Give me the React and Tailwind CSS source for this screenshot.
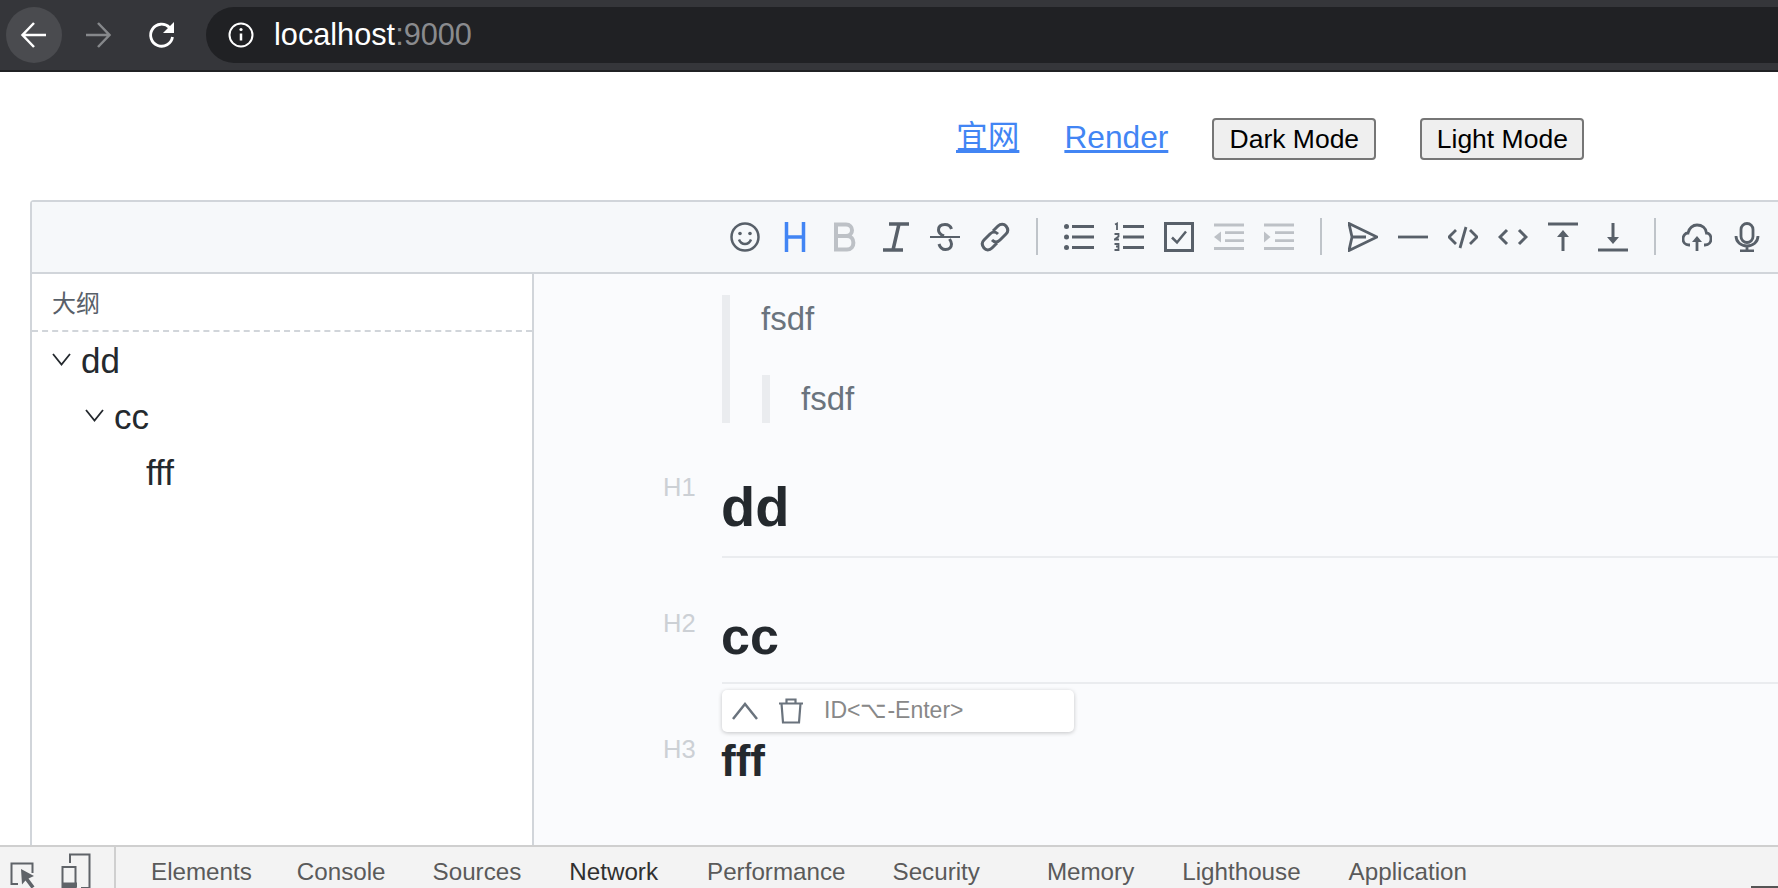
const font = { fontFamily: '"Liberation Sans","Noto Sans CJK SC",sans-serif' };

function Ic({ children, className = "text-[#586069]", w = 30, h = 30, vb = "0 0 30 30" }) {
  return (
    <svg width={w} height={h} viewBox={vb} fill="none" stroke="currentColor" strokeWidth="2.500" className={className}>
      {children}
    </svg>
  );
}

const Btn = ({ children }) => <div className="flex h-[50px] w-[50px] shrink-0 items-center justify-center">{children}</div>;
const Sep = () => <div className="flex h-[37px] w-[34px] shrink-0 justify-center"><div className="h-full w-[2px] bg-[#bfc4c9]" /></div>;

function Toolbar() {
  return (
    <div className="flex h-[72px] items-center border-b-2 border-[#d1d5da] bg-[#f6f8fa] pb-[1px] pl-[688px]">
      <Btn><Ic><circle cx="15" cy="15" r="13.500" /><circle cx="10" cy="11.500" r="1.800" fill="currentColor" stroke="none" /><circle cx="20" cy="11.500" r="1.800" fill="currentColor" stroke="none" /><path d="M9 17.500c1.200 3 3.500 4.500 6 4.500s4.800-1.500 6-4.500" /></Ic></Btn>
      <Btn><Ic className="text-[#4285f4]"><path strokeWidth="3.500" d="M6.500 0v30M23.500 0v30M6.500 15h17" /></Ic></Btn>
      <Btn><Ic className="text-[#bdc1c6]"><path strokeWidth="4" d="M6 2.500h10c8 0 8 11.500 0 11.500H6zM6 14h11c8.500 0 8.500 13.500 0 13.500H6z" /></Ic></Btn>
      <Btn><Ic><path strokeWidth="3.500" d="M9 2h20M3 28h20M19 2L13 28" /></Ic></Btn>
      <Btn><Ic><path strokeWidth="2" d="M0 15h30" /><path strokeWidth="3" d="M21.500 7c-1-3-3-4.500-6.500-4.500-4 0-6.500 2-6.500 5.500 0 2.500 1.500 4.500 5.500 6M9 22c1 3.500 3 5.500 6.500 5.500 4 0 6-2.500 6-5.500 0-2-1-3.500-2-5" /></Ic></Btn>
      <Btn><Ic><path strokeWidth="3" d="M13 9l5-5c2.500-2.500 6-2.500 8 0s2.500 5.500 0 8l-6 6c-2.500 2.500-5.500 2.500-8 0" /><path strokeWidth="3" d="M17 21l-5 5c-2.500 2.500-6 2.500-8 0s-2.500-5.500 0-8l6-6c2.500-2.500 5.500-2.500 8 0" /></Ic></Btn>
      <Sep />
      <Btn><Ic><circle cx="2.500" cy="4.500" r="2.500" fill="currentColor" stroke="none" /><circle cx="2.500" cy="15" r="2.500" fill="currentColor" stroke="none" /><circle cx="2.500" cy="25.500" r="2.500" fill="currentColor" stroke="none" /><path strokeWidth="3" d="M8 4.500h22M8 15h22M8 25.500h22" /></Ic></Btn>
      <Btn><Ic><path strokeWidth="3" d="M9 4.500h21M9 15h21M9 25.500h21" /><path strokeWidth="1.800" d="M1 2.500l2-1v6.500M.5 12h4v2.500l-4 3h4.500M.5 22h4v2.500H2 4.500V28H.5" /></Ic></Btn>
      <Btn><Ic><rect x="1.500" y="1.500" width="27" height="27" strokeWidth="3" /><path strokeWidth="2.500" d="M8 15.500l5 5 9-11" /></Ic></Btn>
      <Btn><Ic className="text-[#bdc1c6]"><path strokeWidth="2.800" d="M0 3h30M11 10.700h19M11 18.700h19M0 26.500h30" /><path d="M7 9.500l-7 5.500 7 5.500z" fill="currentColor" stroke="none" /></Ic></Btn>
      <Btn><Ic className="text-[#bdc1c6]"><path strokeWidth="2.800" d="M0 3h30M11 10.700h19M11 18.700h19M0 26.500h30" /><path d="M0 9.500l6.500 5.500L0 20.500z" fill="currentColor" stroke="none" /></Ic></Btn>
      <Sep />
      <Btn><Ic><path strokeWidth="2.800" d="M1 1.500L29 15 1 28.500 4 15zM4 15h14" /></Ic></Btn>
      <Btn><Ic><path strokeWidth="2.800" d="M0 15h30" /></Ic></Btn>
      <Btn><Ic><path strokeWidth="2.800" d="M8 8l-7 7 7 7M22 8l7 7-7 7M18 5l-6 21" /></Ic></Btn>
      <Btn><Ic><path strokeWidth="3" d="M9 8l-7 7 7 7M21 8l7 7-7 7" /></Ic></Btn>
      <Btn><Ic><path strokeWidth="3" d="M0 2h30M15 29V10" /><path d="M9 15l6-7 6 7z" fill="currentColor" stroke="none" /></Ic></Btn>
      <Btn><Ic><path strokeWidth="3" d="M0 28h30M15 1v19" /><path d="M9 15l6 7 6-7z" fill="currentColor" stroke="none" /></Ic></Btn>
      <Sep />
      <Btn><Ic><path strokeWidth="2.800" d="M8 23H7C3 23 1 20 1 17c0-3 2-6 5-6 1-5 5-8 9-8 5 0 9 3 9.500 8 3 0 4.500 3 4.500 6s-2 6-6 6h-1" /><path strokeWidth="2.800" d="M15 29V16" /><path d="M10 20l5-6 5 6z" fill="currentColor" stroke="none" /></Ic></Btn>
      <Btn><Ic><rect x="9" y="1.500" width="12" height="19" rx="6" strokeWidth="2.800" /><path strokeWidth="2.800" d="M4 14c0 6 5 10 11 10s11-4 11-10M15 24v5M8 29h14" /></Ic></Btn>
    </div>
  );
}

function Chev({ className }) {
  return <svg width="19" height="13" viewBox="0 0 19 13" fill="none" stroke="#24292e" strokeWidth="1.800" className={className}><path d="M1 1l8.500 10.500L18 1" /></svg>;
}

function Outline() {
  return (
    <div className="w-[502px] shrink-0 border-r-2 border-[#d1d5da] bg-white">
      <div className="h-[58px] border-b-2 border-dashed border-[#d1d5da] pl-[20px] pt-[12px] text-[24px] leading-[36px] text-[#586069]">大纲</div>
      <div className="pt-[1px] text-[35px] leading-[56px] text-[#24292e]">
        <div className="flex items-center pl-[20px]"><Chev className="mb-[3px] mr-[10px]" />dd</div>
        <div className="flex items-center pl-[53px]"><Chev className="mb-[3px] mr-[10px]" />cc</div>
        <div className="pl-[114px]">fff</div>
      </div>
    </div>
  );
}

const Marker = ({ children, className }) => <div className={"absolute left-[-59px] text-[25.500px] font-normal leading-[30px] text-[#ccd0d5] " + className}>{children}</div>;

function Content() {
  return (
    <div className="flex-1 bg-[#fafbfd] pl-[188px] pt-[21px]">
      <div className="border-l-[8px] border-[#eaecef] pl-[31px] text-[33px] text-[#6a737d]">
        <div className="h-[80px] leading-[48px]">fsdf</div>
        <div className="ml-[1px] h-[48px] border-l-[8px] border-[#eaecef] pl-[31px] leading-[48px]">fsdf</div>
      </div>
      <div className="relative mt-[47px] h-[88px] border-b-2 border-[#eaecef] pt-[5px] text-[56px] font-bold leading-[64px] text-[#24292e]">
        <Marker className="top-[2px]">H1</Marker>
        <span className="ml-[-1px]">dd</span>
      </div>
      <div className="relative mt-[38px] h-[88px] border-b-2 border-[#eaecef] pt-[10px] text-[52px] font-bold leading-[60px] text-[#24292e]">
        <Marker className="top-[12px]">H2</Marker>
        <span className="ml-[-1px]">cc</span>
      </div>
      <div className="relative h-[160px] text-[44px] font-bold leading-[50px] text-[#24292e]">
        <Marker className="top-[50px]">H3</Marker>
        <div className="ml-[-1px] pt-[52px]">fff</div>
        <div className="absolute left-0 top-[6px] flex h-[42px] w-[352px] items-center rounded-[5px] bg-white pl-[10px] shadow-[0_1px_4px_rgba(0,0,0,0.22)]">
          <svg width="26" height="18" viewBox="0 0 26 18" fill="none" stroke="#6a737d" strokeWidth="2.500"><path d="M1 17L13 2l12 15" /></svg>
          <svg width="26" height="26" viewBox="0 0 26 26" fill="none" stroke="#6a737d" strokeWidth="2.200" className="ml-[20px]"><path d="M1 5.500h24M8.500 5.500V1.500h9v4M3.500 5.500l1.500 19h16l1.500-19" /></svg>
          <span className="mb-[3px] ml-[20px] text-[23px] font-normal leading-[30px] text-[#888]">ID&lt;⌥-Enter&gt;</span>
        </div>
      </div>
    </div>
  );
}

const tabs = [
  ["Elements", "ml-[35px]"], ["Console", "ml-[45px]"], ["Sources", "ml-[47px]"], ["Network", "ml-[48px] text-[#303030]"],
  ["Performance", "ml-[49px]"], ["Security", "ml-[47px]"], ["Memory", "ml-[67px]"], ["Lighthouse", "ml-[48px]"], ["Application", "ml-[48px]"],
];

function DevTools() {
  return (
    <div className="relative flex h-[43px] items-center overflow-hidden border-t-2 border-[#cfcfcf] bg-[#f3f3f3] pl-[10px] text-[24.200px] leading-[30px] text-[#5a5a5a]">
      <svg width="26" height="32" viewBox="0 0 26 32" fill="none" className="mt-[12px] shrink-0">
        <path d="M8 26H1.500V5.500h21V15" stroke="#5f6368" strokeWidth="2" />
        <path d="M11 11l13 7-5.500 2.500 6 8-3 2-6-8-3.500 4z" fill="#5f6368" />
      </svg>
      <svg width="30" height="36" viewBox="0 0 30 36" fill="none" className="ml-[25px] mt-[6px] shrink-0" stroke="#5f6368" strokeWidth="2">
        <path d="M9 10V1.500h19.500V35H20" />
        <rect x="1.500" y="14" width="13" height="20" />
        <path d="M1 32h15" strokeWidth="5" />
      </svg>
      <div className="ml-[23px] h-[43px] w-[2px] shrink-0 bg-[#cfcfcf]" />
      {tabs.map(([t, c]) => <span key={t} className={"mt-[8px] whitespace-nowrap " + c}>{t}</span>)}
      <div className="absolute bottom-0 right-0 h-[2px] w-[27px] bg-[#555]" />
    </div>
  );
}

export default function App() {
  return (
    <div className="flex h-[888px] w-[1778px] flex-col overflow-hidden bg-white" style={font}>
      <div className="flex h-[72px] shrink-0 items-center border-b-[2px] border-[#202124] bg-[#35363a] pb-[2px] pl-[6px] pt-[2px]">
        <div className="flex h-[56px] w-[56px] items-center justify-center rounded-full bg-[#4a4b4f]">
          <svg width="28" height="28" viewBox="0 0 28 28" fill="none" stroke="#fff" strokeWidth="2.500"><path d="M26 14H3M14 2L2.500 14 14 26" /></svg>
        </div>
        <svg width="28" height="28" viewBox="0 0 28 28" fill="none" stroke="#86888b" strokeWidth="2.500" className="ml-[22px]"><path d="M2 14h23M14 2l11.500 12L14 26" /></svg>
        <svg width="28" height="28" viewBox="0 0 28 28" fill="none" stroke="#fff" strokeWidth="2.800" className="ml-[36px]"><path d="M24.500 16a11 11 0 1 1-3-9.500" /><path d="M26 1v11H15z" fill="#fff" stroke="none" /></svg>
        <div className="ml-[30px] flex h-[56px] flex-1 items-center rounded-l-full bg-[#202124] pl-[22px] text-[30.700px]">
          <svg width="26" height="26" viewBox="0 0 26 26" fill="none" stroke="#fff" strokeWidth="2"><circle cx="13" cy="13" r="11.500" /><path d="M13 11.500v7" strokeWidth="2.500" /><circle cx="13" cy="7.500" r="1.600" fill="#fff" stroke="none" /></svg>
          <span className="ml-[20px] text-white">localhost</span><span className="text-[#8a8b8e]">:9000</span>
        </div>
      </div>

      <div className="flex h-[128px] shrink-0 items-start pl-[956px] pt-[46px] text-[31.700px] leading-[44px]">
        <a className="mt-[-3.500px] text-[#4285f4] underline">宜网</a>
        <a className="ml-[45px] mt-[-3.500px] text-[#4285f4] underline">Render</a>
        <button className="ml-[44px] h-[42px] w-[164px] rounded-[4px] border-2 border-[#767676] bg-[#efefef] text-[26.500px] leading-none text-black">Dark Mode</button>
        <button className="ml-[44px] h-[42px] w-[164px] rounded-[4px] border-2 border-[#767676] bg-[#efefef] text-[26.500px] leading-none text-black">Light Mode</button>
      </div>

      <div className="ml-[30px] flex w-[1800px] min-h-0 flex-1 flex-col rounded-tl-[4px] border-l-2 border-t-2 border-[#d1d5da]">
        <Toolbar />
        <div className="flex min-h-0 flex-1">
          <Outline />
          <Content />
        </div>
      </div>
      <DevTools />
    </div>
  );
}
